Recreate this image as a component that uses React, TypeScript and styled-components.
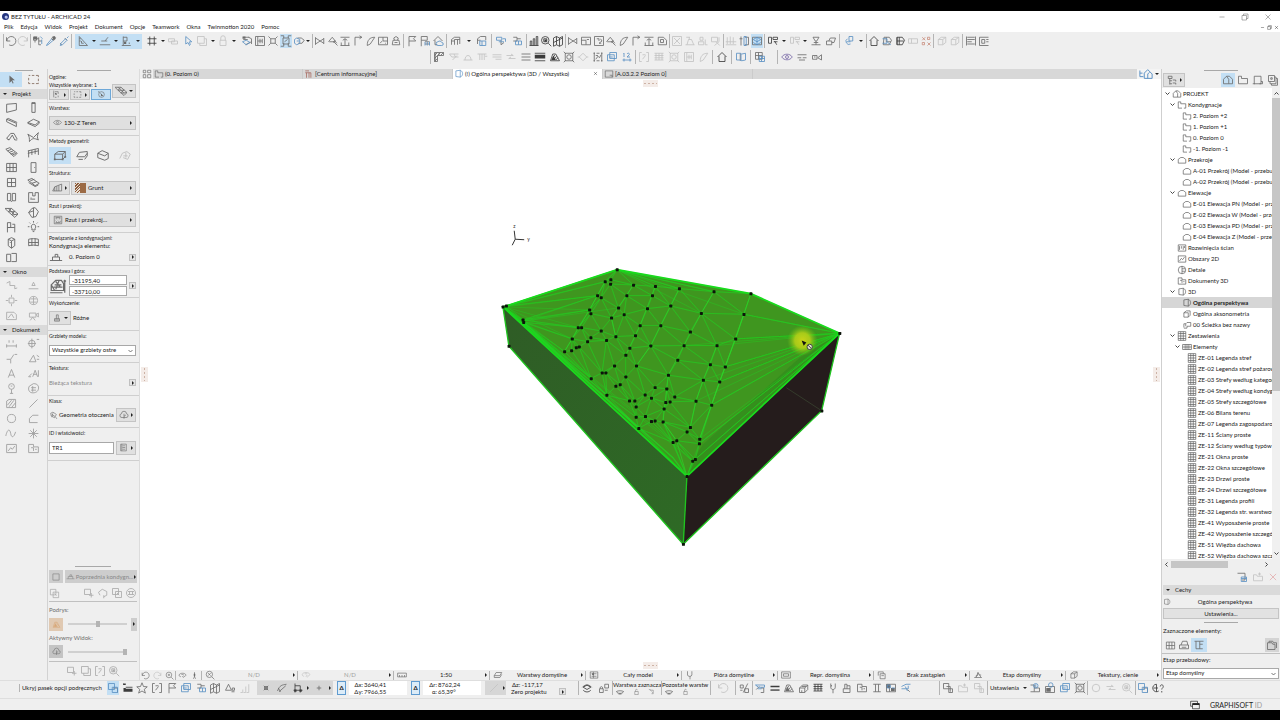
import React from 'react';
import styled, { createGlobalStyle, css } from 'styled-components';

const Global = createGlobalStyle`
  *, *::before, *::after { box-sizing: border-box; }
  html, body { margin: 0; background: #000; }
  body, button, input, select {
    font-family: Lato, "Open Sans", "Liberation Sans", sans-serif;
    font-size: 6px;
    line-height: 8px;
    color: #222;
  }
  button { background: none; border: 0; padding: 0; margin: 0; cursor: pointer; }
`;

/* ---------- icons: [outline, blue accent, solid] on a 16 unit grid ---------- */
const ICONS: Record<string, string[]> = {
  undo: ['M2 3v5h5M2.5 8a6 6 0 1 1 3 5.2'],
  redo: ['M14 3v5h-5M13.5 8a6 6 0 1 0-3 5.2'],
  params: ['M2 3h4v4h-4zM6 5h3M9 3v10M9 8h4M9 13h3M4 7v3', 'M11 2l3 3M13 6v6', 'M2 2h5v4h-5z'],
  pick: ['M9 5l2 2M10 3l3-1 1 1-1 3-2 1-2-2z', 'M9 5l-6 7-1 2 2-1 7-6', 'M10 2h3l1 3-3 2z'],
  inject: ['M9 4l3 3M3 11l2 2', 'M10 5l-6 6-1 3 3-1 6-6zM12 4l2-2'],
  ruler: ['M3 2v12h11zM6 8v3h3M3 5h2M3 8h2', '', ''],
  guide: ['M1 13h14M3 8h8M8 8l4-5', '', ''],
  snapto: ['M3 2v12M3 3h5v5h-5M1 14h12M11 10v2', '', 'M4 9h3v3h-3z'],
  grid: ['M5 2v12M11 2v12M2 5h12M2 11h12'],
  trace: ['M2 5h8v4h-8zM6 8h8v4h-8z'],
  cursor: ['', 'M5 2v10l3-2 2 4 1-1-1-4h3z'],
  copyset: ['M2 2h9v9h-9zM5 11v3h9v-9h-3'],
  lock: ['M4 7h8v7h-8zM5 7v-3a3 3 0 0 1 6 0v3'],
  layers: ['M3 3h8M3 6h6M6 13l8-4M10 3l4 2v7', 'M2 9l5-2 5 3-5 3z', 'M2 2h4v3h-4z'],
  dims: ['M2 2h12v12h-12zM5 2v12M8 5v6M11 5v6M5 8h6'],
  group: ['M5 5h6v6h-6zM2 2l3 3M14 2l-3 3M2 14l3-3M14 14l-3-3'],
  ungroup: ['M4 4h8v8h-8zM1 1h4v3M15 1h-4v3M1 15h4v-4M15 15h-4v-4M6 9l4-3'],
  solid: ['M6 4h5l4 3-3 4h-5', 'M2 6l3-2 4 2v5l-4 2-3-2zM5 8h4'],
  split: ['M2 3v10M2 4l11 7M2 12l11-7M13 4v8', '', ''],
  trim: ['M2 9l5-6 4 5-3 2M8 8l6 6M10 7l3 4M3 9l5 0'],
  adjust: ['M2 3h12M8 5v9M5 7l3-2 3 2M3 10v4M13 10v4M2 14h12'],
  corner: ['M4 14v-11h9M10 1l3 2-3 2'],
  fillet: ['M3 14c0-7 3-11 10-11M3 14l4-2 6-9'],
  resize: ['M2 3h12v10h-12zM8 3v5h6M4 11l3-3M11 11h1'],
  weight: ['M3 13l1-6h8l1 6zM6 7l-1-3 3-2 3 2-1 3M6 10h4'],
  flag: ['M4 15v-13h9l-3 3 3 3h-9'],
  flaggrid: ['M3 15v-13h8v5h-8M8 9h6M8 12h6', 'M8 9v5M11 9v5M14 9v5'],
  cloudhouse: ['M2 8l6-6 6 6M4 7v6h3', 'M8 14a2.500 2.500 0 0 1 0-5 3 3 0 0 1 5 1 2 2 0 0 1 0 4z'],
  couch: ['M2 13v-7l4-3h7v9M6 13v-7h7M2 8h4M10 6v7'],
  couchblue: ['M2 12v-7l4-3h7v5M2 7h4', 'M5 8h8v6h-8zM8 8v6'],
  filter: ['M8 7v6M8 13l4-3', 'M2 3h7v4h-7zM10 5h4v4M5 9h7'],
  filter2: ['M3 3h5v5h-5M8 5h5', 'M6 8h8v5h-8zM10 8v5'],
  chart: ['M2 14h12M3 14v-6h2v6M7 14v-9h2v9M11 14v-12h2v12'],
  zoomel: ['M7 2a5 5 0 1 1 0 10 5 5 0 1 1 0-10M11 11l4 4M5 5h4v4h-4z', '', 'M6 6h3v3h-3z'],
  mapm: ['M2 4l4-2 4 2 4-2v11l-4 2-4-2-4 2zM6 2v11M10 4v11M2 10l12-6'],
  box2: ['M2 3h12v10h-12zM2 7h6v6M9 6h3'],
  stretch: ['M2 2h12v12h-12zM5 5h3v3M11 11h-3M10 5l2 3-4 3'],
  page: ['M3 3h7l4 4v6h-11zM6 6h4v4h-4z'],
  xbox: ['M2 2h12v12h-12zM4 4l8 8M12 4l-8 8'],
  trap: ['M2 13h12M4 13l2-7h4l3 7M3 3h5M7 3v3'],
  stack: ['M4 3h4v4h-4zM2 9h7v4h-7zM11 6v7h3'],
  diag: ['M2 3h8v6h-8zM8 9l5 5M12 3v6l-6 5'],
  pile: ['M3 3v9M7 2v10M11 3v9M1 9h14M1 13h14'],
  wallflip: ['M4 2v12M2 5h4M9 3h5v10h-5', 'M8 2h3v12h-3z'],
  globe: ['M2 3h12v10h-12z', 'M3 6l5-3 5 3-5 3zM3 10l5 3 5-3M8 3v10'],
  cols: ['M2 3h4v8h-4zM8 3h6v3h-6zM10 8l3 5M9 9h5', '', ''],
  cloudline: ['M4 3h8l-3 5h-2zM2 13h12M8 8v5M5 10h6'],
  pages: ['M2 8h7v5h-7zM5 8l2-4h7l-2 6h-3'],
  chain: ['', 'M6 5a4 4 0 1 0 4 7M8 2h5v6h-5zM5 9h5'],
  home: ['M2 8l6-6 6 6M4 7v7h8v-7'],
  bluetrace: ['M4 3h7l3 4-3 6h-8zM7 3v6h6', 'M2 5h6v6h-6M9 10l4 3'],
  tracebk: ['M4 3h7l3 4-3 6h-7zM4 3v10M7 3v10M4 8h9'],
  faint: ['M2 5h12v6h-12zM6 5v6'],
  redx: ['M3 3l4 4M7 3l-4 4M10 3h3v3h-3zM3 10h3v3h-3zM10 10l4 4M14 10l-4 4'],
  cube: ['M3 6l4-3h6v7l-4 3h-6zM3 6h6v7M9 6l4-3'],
  report: ['M3 3h10M3 6h10M3 9h6M3 12h10M2 2v12M14 2v12'],
  report2: ['M2 3h12M2 14h12M5 6h4v5h-4zM11 6h3M11 9h3M2 3v11'],
  hatch: ['M2 2h12v4h-8v8h-4zM2 6l4-4M6 6l4-4M10 6l4-4M2 10l4-4M2 14l4-4M3 2v12M8 2v4'],
  slopes: ['M2 4h12M5 8h9M2 4l3 4M8 4l2 4M6 12l6-6'],
  dome: ['M2 12h12M4 12c0-4 2-6 4-6s4 2 4 6'],
  colsm: ['M2 4h12M5 4v8M8 4v8M11 4v8M12 7h3'],
  swap: ['M2 6h9M8 4l3 2M5 10h9M8 8l-3 2'],
  line2: ['M2 5h12M2 8h12M6 11h8'],
  line3: ['M2 4h12M2 8h12M2 12h12'],
  linebold: ['M1 13h14M1 3h14', '', 'M1 5h14v5h-14z'],
  hill: ['M2 13l3-9h4l5 9zM5 9l3-4M6 12l4-5M9 12l3-3', '', 'M3 12l3-6 3 6z'],
  knot: ['M3 3h10v10h-10zM1 1l3 3M15 1l-3 3M1 15l3-3M15 15l-3-3M8 5a3 3 0 1 1 0 6 3 3 0 1 1 0-6'],
  diamond: ['M8 3l5 5-5 5-5-5zM1 8h2M13 8h2'],
  multi: ['M2 3h2M6 3h4M12 3h2M2 13h2M6 13h4M12 13h2M3 2v12M13 2v12M5 11l3-4 2 2 2-4M5 6h3'],
  bluecopy: ['', 'M5 2h9v8h-9zM2 5h9v8h-9zM4 8h5'],
  bluetwelve: ['', 'M4 3v5M3 4l1-1M8 4c1-2 4-1 3 1l-3 3h4M2 12h12M4 10v4M12 10v4'],
  blueboard: ['M7 3v10', 'M2 3h5l2 1 5-1v9l-5 1-2-1h-5zM8 4v9'],
  bluegrid: ['M2 2h9v9h-9zM6 2v9M2 6h9', 'M7 7h7v7h-7zM10 7v7M7 10h7'],
  eye: ['M1 8c3-5 11-5 14 0-3 5-11 5-14 0zM8 6a2 2 0 1 1 0 4 2 2 0 1 1 0-4'],
  eqs: ['M2 5h12M2 9h5M9 9h5M4 12h8'],
  fish: ['M2 6h6v5h-6zM9 9l5-4v7zM4 8h2'],
  arrowsel: ['', '', 'M5 2v11l3-3 2 4 1-1-2-4h4z'],
  marquee: ['M2 3h2M6 3h3M11 3h3v2M14 7v3M14 12v1h-3M9 13h-3M4 13h-2v-2M2 9v-3'],
  wall: ['M2 4l12-1v8l-12 3z'],
  column: ['M6 2h4v12h-4zM6 3h4'],
  beam: ['M2 4l12 5v4l-12-6zM2 4l2-1 11 5'],
  slab: ['M1 8l7-4 7 3-5 4zM1 8v1l9 4 5-4v-2'],
  roof: ['M2 9l5-6h4l4 7M2 9l3 2 4-6 3 6h3M5 11l-2-1'],
  shell: ['M1 4c2 3 2 5 2 9 4-5 6-4 11-2-2-3-1-6 0-9l-6 6z'],
  stair: ['M1 4l5-2 9 7-4 4zM3 6l5-2M5 8l5-2M7 10l5-2M9 11l5-2'],
  rail: ['M1 6l13-3M2 6v8M6 5v6M10 4v6M14 3v8M1 9l13-3'],
  curtain: ['M2 3h12v10h-12zM6 3v10M10 3v10M2 8h12'],
  door: ['M5 2h6v12h-6zM9 8h1'],
  window: ['M3 3h10v10h-10zM8 3v10M3 8h10'],
  skylight: ['M1 5l5-2 9 6-5 3zM4 6l5-2M6 9l6-2M2 8l8 5 4-2'],
  opening: ['M3 3h4v9h-4zM9 3h4v9h-4zM7 12l1 1 1-1'],
  zone: ['M2 2h5v4h3v-4h4v12h-12zM6 10h4M5 8v3'],
  mesh: ['M0 3l8 0 8 7-4 4M0 3l4 4h8M4 7l8 7M4 3l8 8M8 3l-4 4M12 6l-4 5M16 10l-7 1'],
  morph: ['M6 3l4-1 4 5-3 6-5 1-4-6zM8 2v12M2 8l6-2'],
  object: ['M3 2h4v6h-4zM3 8v6M7 8h5v6M3 8h4M9 4h3v4'],
  lamp: ['M8 4a3 3 0 0 1 2 5v2h-4v-2a3 3 0 0 1 2-5M7 13h2M8 0v2M1 7h2M13 7h2M3 2l1 1M13 2l-1 1'],
  elem: ['M4 4l4-2 4 2v8l-4 3-4-3zM4 4l4 2 4-2M8 6v9M6 8h1'],
  panel: ['M2 4c4-1 8-1 12 0v8c-4-1-8-1-12 0zM6 3v9M10 3v9M2 8h12'],
  sheet: ['M2 4h5v9h-5zM8 3h6v10h-6'],
  section: ['M2 5l4-2v5h6v4M12 12l3-1'],
  elev: ['M2 12h12M8 4l2 4h-4z'],
  interior: ['M8 1v3M8 12v3M1 8h3M12 8h3M5 5h6v6h-6z'],
  detail: ['M8 3a5 5 0 1 1 0 10 5 5 0 1 1 0-10M8 3v10M4 6h8M4 10h8'],
  sheet2: ['M2 4h9l3 3v6h-12zM4 11l4-5 3 5'],
  camera: ['M3 5h8v5h-8zM11 7l3-2v5zM7 10l-3 4M7 10l3 4'],
  dimn: ['M2 11h12M2 9v4M14 9v4M5 4v3M10 4v3'],
  level: ['M6 4a4 4 0 1 1 0 8 4 4 0 1 1 0-8M6 2v12M1 8h10M12 3h3'],
  radial: ['M2 9h5l4-6M7 9v5M12 3h3'],
  angle: ['M3 12l5-8 3 8zM12 4l3 2M12 9h3'],
  texta: ['M4 13l4-10 4 10M5 10h6'],
  label: ['M2 12l4-4M2 12h3M7 12l3-8 3 8M8 9h4M14 4v8'],
  gridm: ['M8 2a3.500 3.500 0 1 1 0 7 3.500 3.500 0 1 1 0-7M8 9v5M6 14h4M7 5h2'],
  change: ['M8 2c5 0 7 3 6 7s-6 5-9 4-4-5-2-8zM5 7h6M5 10h6M7 5v7'],
  fill: ['M2 5l3-2h8v10h-11zM3 10l5-6M5 12l6-8M8 13l5-6'],
  line: ['M3 13l10-10'],
  circle: ['M8 3a5 5 0 1 1 0 10 5 5 0 1 1 0-10'],
  poly: ['M3 13v-5l4-4h7M3 13h10'],
  spline: ['M1 11c2-9 5-9 6-3s4 5 6-2'],
  spark: ['M8 2v12M2 8h12M4 4l8 8M12 4l-8 8'],
  picture: ['M2 3h12v10h-12zM4 11l3-4 2 2 3-4'],
  drawing: ['M2 3h6v3h6v7h-12zM5 7h3v4M10 9h2'],
  mesh1: ['M2 7l4-3h8v6l-3 3h-9zM2 7h9v6M11 7l3-3', '', 'M1 12h2v2h-2zM10 12h2v2h-2zM13 9h2v2h-2z'],
  mesh2: ['M2 10l3-5 9-1v5l-3 4M2 10l9 0 3-4M4 13h5'],
  mesh3: ['M2 6l5-3 7 3v6l-4 2-8-3zM2 6l8 3 4-3'],
  mesh4: ['M2 12l3-6M5 6l5-2 4 3-3 6-5-2M6 9h5M9 5v6'],
  select1: ['M3 3v10M5 3h6v4M11 10v3M5 13h3M6 6l3 3M2 2h2', '', 'M5 5l4 1-3 3z'],
  target: ['M8 3a5 5 0 1 1 0 10 5 5 0 1 1 0-10M6 6l4 4', '', 'M7 6l4 4-4 1zM2 2l3 1-2 2z'],
  surf: ['M1 13l3-6 10-4v10zM4 7v6M7 6v7M10 5v8'],
  floor: ['M1 12h14M4 12v-4h8v4M7 8v-3h3v3'],
  heights: ['M2 7l4-4h5l2 3v6h-8zM5 7l6 0M2 7v5h3M1 14h11M14 3v11M13 4l1-1 1 1M4 9h8M6 4l4 5M9 3l-3 8', '', ''],
  brush: ['M4 13h8v-4h-8zM7 9v-6h3v6M5 11h6'],
  tree: ['M8 14v-8M5 12a3 3 0 0 1-1-6 4 4 0 0 1 8 0 3 3 0 0 1-1 6zM8 10l3-2'],
  classif: ['M3 4l4-2 6 4-3 6-6-3zM5 6l6 4M7 4l-2 7M12 11l2 3'],
  list: ['M3 2h10v12h-10zM6 5h5M6 8h5M6 11h5M5 2v12'],
  seccut: ['M2 2h12v12h-12zM4 6h3M9 6h3M4 9l2 2M8 9l2 2M11 10h2M4 4h8M4 12h8', '', ''],
  square: ['M3 3h10v10h-10z'],
  plusbox: ['M2 3h8v7h-8zM11 8v6M8 11h6'],
  rotate: ['M4 11l-2-4 5-4 6 3v5l-4 2M9 11v4'],
  mirror: ['M2 2h8v8h-8zM6 6h8v8h-8zM8 8l3 3'],
  basket: ['M8 2a6 6 0 1 1 0 12 6 6 0 1 1 0-12M4 6h8M4 10h8M6 6v4M10 6v4'],
  navtree: ['M3 3h5v3h-5zM5 6v8M5 9h3M5 13h3M9 8h4v2M9 12h4v2', '', ''],
  navhouse: ['M2 13v-6l4-4 3 4v6zM6 3h4l4 4v6h-5'],
  navview: ['M2 13v-10h4v3h8v7z'],
  navbook: ['M3 3h9v10h-9zM1 13h3M12 10h2v3h-4'],
  navpub: ['M2 2h8v8h-8zM4 10v3h8v-9h-2M6 13v2h8v-9h-2M5 5h2v2h-2z'],
  story: ['M2 13v-10h4v3h8v7h-3M2 13h6'],
  secic: ['M2 13v-6l4-3h4l4 3v6z'],
  worksheet: ['M2 3h12v10h-12zM4 5v6M7 5v4M10 5v6M12 5v3'],
  detailn: ['M8 2a6 6 0 1 1 0 12 6 6 0 1 1 0-12M8 2v12M8 6h5M8 10h5'],
  three: ['M3 3l7-1v11l-7-1zM10 2c5 2 5 9 0 11'],
  axono: ['M3 6l4-3h6v7l-3 3h-7zM3 6h7v7'],
  cam: ['M3 12v-6h3l2-2h6v6h-6v3h-5M6 6v4'],
  sched: ['M2 1h12v14h-12zM6 1v14M10 1v14M2 4h12M2 8h12M2 12h12'],
  sched2: ['M1 4h14v8h-14zM5 4v8M8 4v8M11 4v8M1 8h14'],
  newview: ['M2 3h10v9h-4', 'M7 8h7v6h-7zM7 10h7'],
  folder: ['M2 5h4l1 2h7v6h-12zM10 2v4M8 4h4'],
  close: ['M3 3l10 10M13 3l-10 10'],
  layout: ['M2 3h12v10h-12zM9 10h4v3'],
  info: ['M2 6h9v8M4 6v8M8 6v8M2 3h6', '', ''],
  tabgrid: ['M2 2h4v4h-4zM9 2h5v4h-5zM2 9h4v5h-4zM9 9h5v5h-5z'],
  bluehouse: ['', 'M1 4v7h4M1 7h3M6 13v-6l4-4 5 5v5zM10 13v-5l2-2'],
  printer: ['M2 8h12v5h-12zM4 8l2-5h6l1 5M5 11h6'],
  pipe: ['M2 3h12M4 3v10M9 3v10M4 13h9M9 7h4'],
  pages2: ['M2 5h6l1 2h3v7h-10zM4 5v-2h5l1 2h4v7'],
  zoomin: ['M7 2a5 5 0 1 1 0 10 5 5 0 1 1 0-10M11 11l4 4M5 7h4M7 5v4'],
  orbit: ['M2 7c1-4 11-4 12 0 0 2-2 3-4 3M10 8l-2 2 2 2M6 6h4M5 10c-2 0-3-1-3-3'],
  walk: ['M8 2v2M8 6v4M8 10l-2 4M8 10l2 4M6 7h4', '', 'M7 4h2v6h-2z'],
  fit: ['M7 2a5 5 0 1 1 0 10 5 5 0 1 1 0-10M11 11l4 4M5 5l4 4M9 5l-4 4'],
  scale: ['M1 5h14v6h-14zM4 8v3M8 8v3M12 8v3'],
  layerst: ['M2 9l3-5h9l-3 5zM2 12h9l3-5M2 9v3'],
  model: ['M2 3h12v10h-12zM4 6h8M4 10h8M7 3v10', '', 'M5 5h3v3h-3z'],
  pen: ['M4 2v6c0 3 7 3 7 0v-6M8 10v5'],
  repr: ['M1 3h14v10h-14zM4 6h8v4h-8z'],
  over: ['M2 3h8v3M5 6h8v8h-8zM7 9h4M2 3v6'],
  etap: ['M2 12h12M5 12l3-8 5 8M8 4v4l-4 2M10 8h3'],
  star: ['M8 1l2 5 5 .4-4 3.400 1.500 5-4.500-2.800-4.500 2.800 1.500-5-4-3.400 5-.4z'],
  bluelink: ['M8 8h6v6', 'M2 2h8v8h-8zM7 7h7v7h-7z'],
  bar: ['M2 2v2M5 7h9', '', 'M2 8h3v1h9v4h-12zM2 2h3v2h-3z'],
  brackets: ['M5 2h-3v12h3M11 2h3v12h-3M6 5h4M6 11l4-5'],
  deltaA: ['M6 3l4 8h-8zM11 8h3v3h-3zM10 13h4'],
  steps: ['M2 14h3v-4M6 14h3v-8M10 14h3v-11'],
  xsmall: ['M5 5l6 6M11 5l-6 6M6 6h4v4h-4z'],
  curve: ['M2 12c3-8 6-8 12-9M4 13l9-8M3 8l3 5'],
  axes: ['M4 2v12M2 11h12M4 5h7v9', '', 'M3 10h3v3h-3zM10 10h3v3h-3z'],
  plus: ['M5 8h6M8 5v6'],
  gravity: ['M2 7c3-4 9-4 12 0M8 4l5 3-5 3-5-3zM3 11c3 3 7 3 10 0'],
  locks: ['M2 9h5v5h-5zM3 9v-2a2 2 0 0 1 3 0v2M9 3h5v5h-5zM9 11h4'],
  dish: ['M1 7c3-2 11-2 14 0-1 5-13 5-14 0zM5 12h6'],
  lockr: ['M4 8h8v7h-8zM6 8v-3a2 2 0 0 1 4 0'],
  hdoc: ['M2 3l5 2M5 5h7v8h-4M8 8l3 3'],
  pct: ['M3 4h4v4h-4zM13 2l-6 12M9 9h5v5h-5zM3 11h3'],
  bluewall: ['M9 8h4v6h-4M3 10l4-4', 'M2 4h12v3h-8zM5 9l5 0'],
  lineb: ['M2 11h12', '', 'M2 5h12v2h-12zM2 10h12v1h-12z'],
  cubes: ['M2 8l4-4h7v6l-4 4h-7zM2 8h7v6M9 8l4-4M5 6h6M5 11v3'],
  hatchsq: ['M2 3h12M2 6h12M2 9h12M2 12h12M4 3v9M8 3v9M12 3v9'],
  wine: ['M5 2v5c0 4 6 4 6 0v-5M8 10v5M6 4v2'],
  truck: ['M3 9h9v5h-9zM5 9v-6h3v6M8 5h4v4'],
  beamI: ['M3 3h10M3 13h10M6 3v10M10 3v10'],
  bluemap: ['M2 3h12v10h-12zM6 3v10', 'M3 4h4v4h-4zM9 8h4', 'M2 3h5v5h-5zM8 8h5v4h-5z'],
  blueshare: ['M10 10l3 3', 'M2 6l6-3h6M2 9h9M7 6l3 6M11 5v4'],
  docs: ['M2 2h7v7h-7zM6 6h5v7M9 9h5v5h-5z'],
  folderb: ['M2 4h5v9h-5M7 8h7v5h-7', 'M9 2a3 3 0 1 1 0 6 3 3 0 1 1 0-6M9 3v4'],
  camb: ['M2 6h12v8h-12z', 'M9 1a3 3 0 1 1 0 6 3 3 0 1 1 0-6', 'M3 8h6v5h-6z'],
  globeq: ['M6 3a5 5 0 1 0 3 9M2 8h6M6 3v10M11 6c0-3 4-3 4 0 0 2-2 2-2 4M13 12v2'],
  restore: ['M2 5h9v9h-9zM5 5v-3h9v9h-3'],
  minimise: ['M3 8h10'],
  windows: ['M1 2h11v3M4 6h11v8h-11zM1 2v8h3', '', 'M4 5h11v3h-11z'],
};

const Svg = styled.svg<{ $s: number }>`
  width: ${p => p.$s}px;
  height: ${p => p.$s}px;
  flex: none;
  display: block;
`;

const FADED = '#c2c2c2';
type IconProps = { n: string; s?: number; c?: string };
const Icon = ({ n, s = 12, c = '#6c6c6c' }: IconProps) => {
  const [base, accent, solid] = ICONS[n];
  return (
    <Svg $s={s} viewBox="0 0 16 16" fill="none" strokeWidth="1.1" aria-hidden="true">
      {solid && <path d={solid} fill={c} />}
      {base && <path d={base} stroke={c} />}
      {accent && <path d={accent} stroke={c === FADED ? c : '#5a90c4'} />}
    </Svg>
  );
};

const Caret = styled.i<{ $dir?: 'right' }>`
  width: 0;
  height: 0;
  flex: none;
  border: 2px solid transparent;
  ${p => p.$dir === 'right'
    ? css`border-left: 2px solid #222; border-right: 0;`
    : css`border-top: 2px solid #222; border-bottom: 0;`}
`;

/* ---------- frame ---------- */
const Page = styled.div`
  height: 100vh;
  display: flex;
  flex-direction: column;
  background: #efefef;
  border-top: 11px solid #000;
  border-bottom: 10px solid #000;
  overflow: hidden;
`;
const TitleBar = styled.header`
  display: flex;
  align-items: center;
  gap: 2px;
  height: 11px;
  padding: 0 8px 0 2px;
  background: #fff;
`;
const AppMark = styled.span`
  width: 7px;
  height: 7px;
  border-radius: 50%;
  background: radial-gradient(circle at 60% 60%, #b9c4ee 0 1px, #24357f 2px);
`;
const Title = styled.h1`
  margin: 0;
  font-size: 6px;
  line-height: 10px;
  font-weight: 400;
  flex: 1;
`;
const WindowButtons = styled.div<{ $gap: number }>`
  display: flex;
  gap: ${p => p.$gap}px;
`;
const MenuBar = styled.nav`
  display: flex;
  align-items: center;
  gap: 7px;
  height: 10px;
  padding: 0 1px 0 4px;
  background: #fff;
`;
const Spacer = styled.span`flex: 1;`;
const Toolbars = styled.div`
  height: 37px;
  padding-top: 1px;
`;
const ToolRow = styled.div<{ $start: number }>`
  display: flex;
  align-items: center;
  height: 16px;
  padding-left: ${p => p.$start}px;
`;
const Group = styled.div<{ $w: number; $bare?: boolean }>`
  display: flex;
  align-items: center;
  justify-content: space-around;
  width: ${p => p.$w}px;
  flex: none;
  height: 14px;
  border-left: 1px solid ${p => (p.$bare ? 'transparent' : '#b4b4b4')};
  padding: 0 1px;
`;
const Tool = styled.button<{ $on?: boolean; $pressed?: boolean; $w?: number }>`
  display: flex;
  align-items: center;
  justify-content: center;
  height: 14px;
  min-width: ${p => p.$w ?? 12}px;
  background: ${p => (p.$on ? '#c3dff4' : p.$pressed ? '#d4d4d4' : 'none')};
`;
const SnapBlock = styled.div`
  display: flex;
  align-items: center;
  justify-content: space-around;
  flex: 1;
  height: 15px;
  margin-left: 2px;
  background: #c3dff4;
`;

const FLAG_COLORS: Record<string, string> = { f: FADED, r: '#c98f80', p: '#7a6aa8', d: '#3c3c3c' };
const tools = (spec: string) =>
  spec.split(' ').filter(Boolean).map((t, i) => {
    if (t === 'v') return <Caret key={i} />;
    if (t === 'r') return <Caret key={i} $dir="right" />;
    const [n, flag] = t.split(':');
    return <Tool key={i} $on={flag === 'h'} aria-label={n}><Icon n={n} c={FLAG_COLORS[flag]} /></Tool>;
  });

type GroupSpec = { w: number; t: string; bare?: boolean; snap?: boolean };
const Groups = ({ list }: { list: GroupSpec[] }) => (
  <>
    {list.map((g, i) => (
      <Group key={i} $w={g.w} $bare={g.bare}>
        {g.snap ? <SnapBlock>{tools(g.t)}</SnapBlock> : tools(g.t)}
      </Group>
    ))}
  </>
);

const ROW_1: GroupSpec[] = [
  { w: 27, t: 'undo redo:f' },
  { w: 41, t: 'params pick inject' },
  { w: 72, t: 'ruler v guide v snapto v', snap: true },
  { w: 95, t: 'grid:d v trace:f cursor copyset:f v lock:f v', bare: true },
  { w: 74, t: 'layers dims group ungroup:h solid v', bare: true },
  { w: 91, t: 'split trim adjust corner fillet resize weight' },
  { w: 43, t: 'flag flaggrid cloudhouse' },
  { w: 45, t: 'couch v couchblue' },
  { w: 35, t: 'filter filter2' },
  { w: 39, t: 'chart:d zoomel:d mapm:d' },
  { w: 104, t: 'split box2 stretch trim fillet corner adjust page' },
  { w: 54, t: 'xbox:f trap:f stack:f diag:f' },
  { w: 41, t: 'pile:f wallflip globe:h' },
  { w: 75, t: 'cols:d v cols:f v cloudline pages' },
  { w: 27, t: 'chain v' },
  { w: 67, t: 'home:d bluetrace tracebk:d faint:f redx:r' },
  { w: 29, t: 'cube:f cube:f' },
  { w: 29, t: 'report report2' },
];
const ROW_2: GroupSpec[] = [
  { w: 205, t: 'hatch slopes:f dome:f colsm:f line2:f swap:f line3 linebold:d hill:d knot diamond:f multi bluecopy bluetwelve' },
  { w: 77, t: 'brackets:f hatchsq:f knot:f dims:f fillet:f' },
  { w: 19, t: 'home:d' },
  { w: 19, t: 'blueboard' },
  { w: 19, t: 'bluegrid' },
  { w: 8, t: '', bare: true },
  { w: 48, t: 'eye:p eqs fish' },
];
const MENUS = ['Plik', 'Edycja', 'Widok', 'Projekt', 'Dokument', 'Opcje', 'Teamwork', 'Okna', 'Twinmotion 2020', 'Pomoc'];

/* ---------- main area ---------- */
const Main = styled.main`
  flex: 1;
  min-height: 0;
  display: flex;
`;
const Toolbox = styled.aside`
  width: 48px;
  flex: none;
  border-right: 1px solid #d2d2d2;
`;
const Grip = styled.div<{ $w: number }>`
  width: ${p => p.$w}px;
  height: 1px;
  margin: 1px auto;
  background: #a8a8a8;
`;
const ToolGrid = styled.div`
  display: grid;
  grid-template-columns: 22px 22px;
  grid-auto-rows: 15px;
  place-items: center;
`;
const ToolHeading = styled.button`
  display: flex;
  align-items: center;
  gap: 5px;
  width: 47px;
  height: 10px;
  margin: 2px 0 1px;
  padding-left: 3px;
  background: #dadada;
`;
const PickButton = styled.button<{ $on?: boolean }>`
  display: grid;
  place-items: center;
  width: 22px;
  height: 15px;
  background: ${p => (p.$on ? '#c3dff4' : 'none')};
`;

const InfoBox = styled.aside`
  width: 92px;
  flex: none;
  display: flex;
  flex-direction: column;
  border-right: 1px solid #dcdcdc;
`;
const Section = styled.section`
  height: 33px;
  &:nth-of-type(odd) { height: 32px; }
  &:first-of-type { height: 31px; }
  padding: 1px 3px 2px 1px;
  border-bottom: 1px solid #cfcfcf;
  display: flex;
  flex-direction: column;
`;
const Caption = styled.h2`
  margin: 0;
  font-size: 5px;
  line-height: 8px;
  font-weight: 400;
  white-space: nowrap;
`;
const SelectionRow = styled.div`
  display: flex;
  align-items: center;
  justify-content: space-between;
`;
const SelectionTools = styled.div`
  display: flex;
  gap: 1px;
`;
const Body = styled.div<{ $gap?: number }>`
  flex: 1;
  display: flex;
  align-items: center;
  gap: ${p => p.$gap ?? 0}px;
  white-space: nowrap;
`;
const Field = styled.button<{ $grow?: boolean; $on?: boolean }>`
  display: flex;
  align-items: center;
  justify-content: space-between;
  gap: 2px;
  height: 14px;
  min-width: 20px;
  padding: 0 2px;
  ${p => p.$grow && 'flex: 1; padding: 0 3px;'}
  background: ${p => (p.$on ? '#c3dff4' : '#e0e0e0')};
  border: 1px solid ${p => (p.$on ? '#6ea8d8' : '#c4c4c4')};
`;
const FieldText = styled.span`flex: 1; text-align: left; white-space: nowrap;`;
const SmallField = styled(Field)`height: 11px; justify-content: space-around;`;
const GeoButton = styled.button<{ $on?: boolean }>`
  display: grid;
  place-items: center;
  width: 22px;
  height: 17px;
  background: ${p => (p.$on ? '#c3dff4' : 'none')};
`;
const Swatch = styled.span`
  width: 11px;
  height: 10px;
  border-right: 6px solid #9c6b45;
  background: repeating-linear-gradient(135deg, #8a5a38 0 1px, #e8ddd2 1px 2px);
`;
const TextInput = styled.input<{ $h: number }>`
  flex: 1;
  min-width: 0;
  width: 100%;
  height: ${p => p.$h}px;
  border: 1px solid #a8a8a8;
  border-radius: 0;
  background: #fff;
  padding: 0 2px;
`;
const Pair = styled.div`
  display: grid;
  flex: 1;
  gap: 1px;
`;
const MiniArrow = styled.button`
  display: grid;
  place-items: center;
  width: 7px;
  height: 7px;
  border: 1px solid #c0c0c0;
  background: #e4e4e4;
`;
const SelectWrap = styled.label`
  position: relative;
  flex: 1;
  display: block;
`;
const Select = styled.select`
  width: 100%;
  height: 11px;
  appearance: none;
  border: 1px solid #a8a8a8;
  border-radius: 0;
  background: #fff;
  padding: 0 2px;
  display: block;
`;
const SelectChevron = styled.svg`
  position: absolute;
  right: 3px;
  top: 4px;
  width: 5px;
  height: 4px;
  pointer-events: none;
`;
const Muted = styled.span`flex: 1; color: #8a8a8a;`;
const Dim = styled.div`
  padding: 0 2px 0 1px;
  color: #6e6e6e;
  margin-top: auto;
`;
const DimRow = styled.div<{ $h: number; $end?: boolean }>`
  display: flex;
  align-items: center;
  gap: 2px;
  height: ${p => p.$h}px;
  ${p => p.$end && 'justify-content: space-around;'}
`;
const DimButton = styled.button<{ $grow?: boolean; $c?: string }>`
  display: flex;
  align-items: center;
  justify-content: center;
  gap: 1px;
  min-width: 14px;
  height: 13px;
  ${p => p.$grow && 'flex: 1; white-space: nowrap;'}
  color: #888;
  background: ${p => p.$c ?? '#cdcdcd'};
`;
const NarrowButton = styled(DimButton)`min-width: 6px;`;
const Rule = styled.hr`
  border: 0;
  height: 1px;
  margin: 0;
  background: #c0c0c0;
`;
const Range = styled.input`
  appearance: none;
  flex: 1;
  min-width: 0;
  height: 8px;
  margin: 0 2px 0 3px;
  background: linear-gradient(#d0d0d0, #d0d0d0) center / 100% 2px no-repeat;
  &::-webkit-slider-thumb {
    appearance: none;
    width: 4px;
    height: 6px;
    background: #b4b4b4;
  }
`;
const SmallGap = styled.span`width: 6px;`;

const Center = styled.div`
  flex: 1;
  min-width: 0;
  display: flex;
  flex-direction: column;
`;
const Tabs = styled.div`
  display: flex;
  height: 10px;
  background: #d8d8d8;
`;
const TabsHome = styled.button`
  display: grid;
  place-items: center;
  width: 13px;
  background: #efefef;
`;
const TabsEnd = styled.div`
  display: flex;
  align-items: center;
  justify-content: space-evenly;
  width: 24px;
  background: #f4f4f4;
`;
const Tab = styled.button<{ $on?: boolean }>`
  display: flex;
  align-items: center;
  gap: 1px;
  width: 150px;
  height: 10px;
  padding: 0 4px 1px 1px;
  border-right: 1px solid #cbcbcb;
  background: ${p => (p.$on ? '#fff' : 'none')};
`;
const TabText = styled.span`flex: 1; text-align: left;`;
const Viewport = styled.div`
  position: relative;
  flex: 1;
  min-height: 0;
  background: #fff;
`;
const Scene = styled.svg`
  display: block;
  width: 100%;
  height: 100%;
`;
const Handle = styled.i<{ $side: 'top' | 'bottom' | 'left' | 'right' }>`
  position: absolute;
  ${p => (p.$side === 'top' || p.$side === 'bottom'
    ? css`left: 50%; margin-left: -8px; width: 15px; height: 7px; border: solid #f4ece8; border-width: 3px 1px; background: repeating-linear-gradient(90deg, #cdb3a6 0 2px, #f4ece8 2px 4px);`
    : css`top: 50%; margin-top: -8px; width: 7px; height: 15px; border: solid #f4ece8; border-width: 1px 3px; background: repeating-linear-gradient(#cdb3a6 0 2px, #f4ece8 2px 4px);`)}
  ${p => p.$side}: 1px;
`;
const QuickBar = styled.div`
  display: flex;
  align-items: center;
  height: 10px;
`;
const QuickGroup = styled.div<{ $w: number }>`
  display: flex;
  justify-content: space-around;
  width: ${p => p.$w}px;
  border-right: 1px solid #b4b4b4;
`;
const QuickCell = styled.button`
  display: flex;
  align-items: center;
  flex: 1;
  height: 9px;
  padding: 0 2px 0 3px;
  border-right: 1px solid #b4b4b4;
  &:last-child { border-right: 0; }
`;
const QuickText = styled.span<{ $dim?: boolean }>`
  flex: 1;
  text-align: center;
  color: ${p => (p.$dim ? '#a0a0a0' : '#222')};
`;
const QUICK: [string, string][] = [
  ['fit', 'N/D'], ['orbit', 'N/D'], ['scale', '1:50'], ['layerst', 'Warstwy domyślne'], ['model', 'Cały model'],
  ['pen', 'Pióra domyślne'], ['repr', 'Repr. domyślna'], ['over', 'Brak zastąpień'], ['etap', 'Etap domyślny'], ['cube', 'Tekstury, cienie'],
];

/* ---------- navigator ---------- */
const Navigator = styled.aside`
  width: 119px;
  flex: none;
  display: flex;
  flex-direction: column;
  border-left: 1px solid #cfcfcf;
`;
const NavHeader = styled.div`
  display: flex;
  align-items: center;
  justify-content: space-between;
  height: 16px;
  padding-left: 1px;
`;
const NavTabs = styled.div`display: flex; gap: 1px;`;
const TreeArea = styled.div`
  flex: 1 1 0;
  min-height: 0;
  display: flex;
  background: #fff;
`;
const Tree = styled.ul`
  flex: 1;
  min-width: 0;
  overflow: hidden;
  list-style: none;
  margin: 0;
  padding: 0;
`;
const TreeRow = styled.li<{ $level: number; $on?: boolean }>`
  display: flex;
  align-items: center;
  height: 11px;
  padding-left: ${p => 1 + p.$level * 5}px;
  white-space: nowrap;
  font-weight: ${p => (p.$on ? 700 : 400)};
  background: ${p => (p.$on ? '#d6d6d6' : 'none')};
`;
const Twist = styled.span`width: 9px; flex: none; display: grid; place-items: center;`;
const TreeIcon = styled.span`width: 11px; flex: none;`;
const VScroll = styled.div`
  width: 8px;
  display: flex;
  flex-direction: column;
  align-items: center;
  justify-content: space-between;
  padding: 3px 0;
  background: #f0f0f0;
`;
const VThumb = styled.i`
  width: 8px;
  height: 63%;
  margin: 2px 0 auto;
  background: #c6c6c6;
`;
const HScroll = styled.div`
  display: flex;
  align-items: center;
  height: 10px;
  padding: 0 11px 0 2px;
`;
const HThumb = styled.i`
  width: 57px;
  height: 7px;
  margin: 0 auto 0 2px;
  background: #c6c6c6;
`;
const NavActions = styled.div`
  display: flex;
  justify-content: flex-end;
  align-items: center;
  gap: 4px;
  height: 16px;
  padding-right: 2px;
`;
const NavHeading = styled(ToolHeading)`width: auto; margin: 0 0 0 1px;`;
const NavLine = styled.div<{ $h: number }>`
  display: flex;
  align-items: center;
  height: ${p => p.$h}px;
  padding: 0 1px;
`;
const NavCentered = styled.span`flex: 1; text-align: center;`;
const WideButton = styled.button`
  height: 11px;
  margin: 0 1px;
  border: 1px solid #c4c4c4;
  background: #e2e2e2;
`;
type Node = [number, string, string, boolean?, boolean?];
const TREE: Node[] = [
  [0, 'navhouse', 'PROJEKT', true],
  [1, 'story', 'Kondygnacje', true],
  [2, 'story', '2. Poziom +2'], [2, 'story', '1. Poziom +1'], [2, 'story', '0. Poziom 0'], [2, 'story', '-1. Poziom -1'],
  [1, 'secic', 'Przekroje', true],
  [2, 'secic', 'A-01 Przekrój (Model - przebudowa)'], [2, 'secic', 'A-02 Przekrój (Model - przebudowa)'],
  [1, 'secic', 'Elewacje', true],
  [2, 'secic', 'E-01 Elewacja PN (Model - przebudowa)'], [2, 'secic', 'E-02 Elewacja W (Model - przebudowa)'],
  [2, 'secic', 'E-03 Elewacja PD (Model - przebudowa)'], [2, 'secic', 'E-04 Elewacja Z (Model - przebudowa)'],
  [1, 'worksheet', 'Rozwinięcia ścian'], [1, 'picture', 'Obszary 2D'], [1, 'detailn', 'Detale'], [1, 'drawing', 'Dokumenty 3D'],
  [1, 'three', '3D', true],
  [2, 'three', 'Ogólna perspektywa', false, true], [2, 'axono', 'Ogólna aksonometria'], [2, 'cam', '00 Ścieżka bez nazwy'],
  [1, 'sched', 'Zestawienia', true],
  [2, 'sched2', 'Elementy', true],
  ...[
    'ZE-01 Legenda stref', 'ZE-02 Legenda stref pożarowych', 'ZE-03 Strefy według kategorii', 'ZE-04 Strefy według kondygnacji',
    'ZE-05 Strefy szczegółowe', 'ZE-06 Bilans terenu', 'ZE-07 Legenda zagospodarowania', 'ZE-11 Ściany proste',
    'ZE-12 Ściany według typów', 'ZE-21 Okna proste', 'ZE-22 Okna szczegółowe', 'ZE-23 Drzwi proste', 'ZE-24 Drzwi szczegółowe',
    'ZE-31 Legenda profili', 'ZE-32 Legenda str. warstwowych', 'ZE-41 Wyposażenie proste', 'ZE-42 Wyposażenie szczegółowe',
    'ZE-51 Więźba dachowa', 'ZE-52 Więźba dachowa szczegółowa',
  ].map((t): Node => [3, 'sched', t]),
];

/* ---------- bottom bars ---------- */
const BottomBar = styled.div`
  display: flex;
  align-items: center;
  height: 18px;
  padding: 0 0 3px 19px;
  border-top: 1px solid #dedede;
  white-space: nowrap;
`;
const Hint = styled.span`
  width: 86px;
  border-left: 1px solid #b4b4b4;
  padding-left: 2px;
`;
const Cluster = styled.div<{ $w: number; $shade?: boolean; $line?: boolean }>`
  display: flex;
  align-items: center;
  justify-content: space-around;
  width: ${p => p.$w}px;
  flex: none;
  height: 14px;
  background: ${p => (p.$shade ? '#d6d6d6' : 'none')};
  border-left: 1px solid ${p => (p.$line ? '#b4b4b4' : 'transparent')};
`;
const DeltaButton = styled.button`
  width: 9px;
  height: 14px;
  margin: 0 3px 0 4px;
  border: 1px solid #5f9bd0;
  background: #dcecf8;
  font-weight: 700;
  flex: none;
`;
const Coords = styled.dl<{ $w: number }>`
  width: ${p => p.$w}px;
  flex: none;
  height: 14px;
  margin: 0;
  padding-left: 2px;
  display: grid;
  grid-template-columns: 12px 1fr;
  line-height: 7px;
  background: #fff;
`;
const Term = styled.dt`text-align: right;`;
const Value = styled.dd`margin: 0 0 0 1px;`;
const ZeroField = styled.div`
  width: 60px;
  flex: none;
  padding-left: 5px;
  line-height: 7px;
`;
const ZeroTop = styled.div`padding-left: 1px;`;
const ZeroRow = styled.div`display: flex; justify-content: space-between; align-items: center; height: 7px;`;
const LayerBlock = styled.div`
  width: 49px;
  flex: none;
  height: 14px;
  border-left: 1px solid #b4b4b4;
  line-height: 7px;
`;
const LayerIcons = styled.div`display: flex; justify-content: space-between; padding: 0 6px 0 3px;`;
const TextMenu = styled.button`
  display: flex;
  align-items: center;
  gap: 4px;
  padding-left: 2px;
  width: 40px;
  height: 14px;
  border-left: 1px solid #b4b4b4;
`;
const Status = styled.footer`
  display: flex;
  align-items: center;
  justify-content: flex-end;
  gap: 10px;
  height: 12px;
  padding-right: 18px;
  border-top: 1px solid #dedede;
`;
const Brand = styled.span`font-size: 7px;`;
const BrandLight = styled.span`color: #9a9a9a;`;

/* ---------- terrain model ---------- */
type P = [number, number];
const RIM: P[] = [[381, 165], [783, 237], [1050, 356], [591, 786], [38, 277]];
const SURVEY: P[] = [
  [48, 274], [345, 201], [362, 195], [361, 208], [322, 243], [333, 249], [430, 211], [496, 215], [568, 222], [672, 231], [762, 299],
  [487, 243], [410, 243], [542, 274], [472, 282], [385, 280], [402, 300], [364, 310], [298, 286], [302, 297], [634, 296], [512, 333],
  [450, 333], [601, 352], [737, 373], [264, 339], [274, 339], [333, 349], [436, 363], [377, 366], [302, 369], [292, 381], [246, 373],
  [349, 377], [482, 394], [582, 393], [681, 393], [419, 401], [223, 411], [244, 408], [258, 399], [267, 397], [407, 422], [563, 437],
  [373, 454], [439, 454], [661, 450], [706, 457], [98, 316], [100, 323], [303, 492], [336, 475], [347, 475], [535, 482], [407, 487],
  [640, 497], [689, 502], [377, 515], [390, 510], [495, 519], [530, 523], [350, 542], [465, 541], [484, 551], [554, 547], [418, 559],
  [434, 559], [527, 564], [540, 562], [618, 560], [665, 572], [438, 577], [522, 583], [438, 608], [466, 606], [446, 642], [484, 621],
  [495, 619], [519, 622], [601, 639], [591, 652], [629, 674], [628, 688], [549, 684], [560, 679], [608, 740], [616, 735],
];
const FEET: P[] = [[56, 395], [580, 990], [996, 589]];

// Bowyer-Watson triangulation of the survey points; returns the edges as one path
const triangulate = (pts: P[]): string => {
  const all: P[] = [...pts, [-9000, -9000], [10000, -9000], [500, 12000]];
  const n = pts.length;
  let tris: number[][] = [[n, n + 1, n + 2]];
  const inside = (t: number[], p: P) => {
    const [ax, ay] = all[t[0]], [bx, by] = all[t[1]], [cx, cy] = all[t[2]];
    const d = 2 * (ax * (by - cy) + bx * (cy - ay) + cx * (ay - by));
    if (!d) return true;
    const a = ax * ax + ay * ay, b = bx * bx + by * by, c = cx * cx + cy * cy;
    const ux = (a * (by - cy) + b * (cy - ay) + c * (ay - by)) / d;
    const uy = (a * (cx - bx) + b * (ax - cx) + c * (bx - ax)) / d;
    return (ux - p[0]) ** 2 + (uy - p[1]) ** 2 < (ux - ax) ** 2 + (uy - ay) ** 2;
  };
  for (let i = 0; i < n; i++) {
    const bad = tris.filter(t => inside(t, all[i]));
    const count = new Map<string, number>();
    const key = (a: number, b: number) => (a < b ? `${a},${b}` : `${b},${a}`);
    bad.forEach(t => [[0, 1], [1, 2], [2, 0]].forEach(([a, b]) => {
      const k = key(t[a], t[b]);
      count.set(k, (count.get(k) ?? 0) + 1);
    }));
    tris = tris.filter(t => !bad.includes(t));
    count.forEach((v, k) => { if (v === 1) tris.push([...k.split(',').map(Number), i]); });
  }
  return tris.filter(t => t.every(v => v < n)).map(t => 'M' + t.map(v => all[v].join(' ')).join('L') + 'Z').join('');
};
const fan = (from: P, to: P[]) => to.map(p => `M${from[0]} ${from[1]}L${p[0]} ${p[1]}`).join('');
const MESH = triangulate([...RIM, ...SURVEY]);
const FANS =
  fan([381, 165], [[568, 222], [672, 231], [762, 299], [634, 296], [345, 201]]) +
  fan([44, 277], [[345, 201], [322, 243], [298, 286], [264, 339], [246, 373], [223, 411], [303, 492], [350, 542], [446, 642], [549, 684], [608, 740]]) +
  fan([1050, 356], [[762, 299], [737, 373], [681, 393], [706, 457], [689, 502], [665, 572], [618, 560], [629, 674], [628, 688], [616, 735], [582, 393], [640, 497]]) +
  fan([98, 320], [[298, 286], [246, 373], [298, 250], [385, 280]]) +
  fan([591, 786], [[549, 684], [608, 740], [446, 642], [519, 622], [628, 688]]);
// survey lines running from the north edge to the south-west
const LINES = 'M783 237L737 373L689 502L629 674M672 231L634 296L582 393L535 482L519 622L560 679L591 786M568 222L512 333L482 394L439 454'
  + 'M496 215L450 333L407 422M430 211L364 310L377 366M762 299L706 457L665 572M681 393L640 497L618 560L601 639M345 201L298 286L246 373L223 411';

const Model = () => (
  <Scene viewBox="140 79 1021 592" role="img" aria-label="Ogólna perspektywa">
    <defs>
      <radialGradient id="halo">
        <stop offset="0" stopColor="#c8d419" />
        <stop offset=".5" stopColor="#b4cf18" stopOpacity=".9" />
        <stop offset="1" stopColor="#6cc018" stopOpacity="0" />
      </radialGradient>
      <linearGradient id="side" x1="0" y1="0" x2="1" y2="1">
        <stop offset="0" stopColor="#2f5c26" />
        <stop offset="1" stopColor="#2e6a25" />
      </linearGradient>
    </defs>
    <path d="M514 231l1 8.500 9 .5M515 239.500l-3 6" stroke="#333" fill="none" />
    <text x="513" y="228" fontSize="5" fill="#333">z</text>
    <text x="527" y="241" fontSize="5" fill="#333">y</text>
    <g transform="translate(490 215) scale(.3333)">
      <path d="M38 277L56 395L580 990L591 786Z" fill="url(#side)" />
      <path d="M591 786L580 990L996 589L1050 356Z" fill="#251c1c" />
      <path d="M890 520L996 589" stroke="#3c4a34" strokeWidth="2" />
      <path d="M381 165L783 237L1050 356L591 786L38 277Z" fill="#3f961f" />
      <path d="M625 712L640 690L930 430L1050 356L591 786Z" fill="#2f8a1c" opacity=".6" />
      <path d={MESH} fill="none" stroke="#22cf20" strokeWidth="2.500" opacity=".5" />
      <path d={FANS} fill="none" stroke="#22cf20" strokeWidth="2.500" opacity=".5" />
      <path d={LINES} fill="none" stroke="#2fd62a" strokeWidth="3" opacity=".6" />
      <path d="M44 280L549 730L591 786M100 323L446 642" fill="none" stroke="#1edc22" strokeWidth="4" opacity=".7" />
      <path d="M38 277L56 395L580 990L996 589L1050 356M580 990L591 786" fill="none" stroke="#1fc41f" strokeWidth="4" />
      <path d="M381 165L783 237L1050 356L591 786L38 277Z" fill="none" stroke="#18dc1c" strokeWidth="5" />
      <circle cx="938" cy="378" r="46" fill="url(#halo)" />
      {[...RIM, ...SURVEY, ...FEET].map(([x, y], i) => (
        <rect key={i} x={x - 4} y={y - 4} width="9" height="9" rx="2" fill="#0c140a" />
      ))}
      <path d="M936 378l14 6-8 10z" fill="#111" />
      <circle cx="960" cy="397" r="8" fill="#dfe8c8" stroke="#444" strokeWidth="3" />
      <path d="M955 392l10 10" stroke="#444" strokeWidth="3" />
    </g>
  </Scene>
);

const PROJECT_TOOLS = 'wall column beam slab roof shell stair rail curtain door window skylight opening zone mesh morph object lamp elem panel sheet'.split(' ');
const VIEW_TOOLS = 'section elev interior detail sheet2 camera'.split(' ');
const DOC_TOOLS = 'dimn level radial angle texta label gridm change fill line circle poly spline spark picture drawing'.split(' ');

const ToolSet = ({ names, color }: { names: string[]; color: string }) => (
  <ToolGrid>
    {names.map(n => <PickButton key={n} aria-label={n}><Icon n={n} s={13} c={color} /></PickButton>)}
  </ToolGrid>
);
const Chevron = () => <SelectChevron viewBox="0 0 5 4"><path d="M.5 1l2 2 2-2" fill="none" stroke="#555" strokeWidth=".8" /></SelectChevron>;
const Tick = ({ d }: { d: string }) => <svg width="5" height="5" viewBox="0 0 5 5"><path d={d} fill="none" stroke="#333" strokeWidth=".9" /></svg>;

export default function App() {
  return (
    <Page>
      <Global />
      <TitleBar>
        <AppMark />
        <Title>BEZ TYTUŁU - ARCHICAD 24</Title>
        <WindowButtons $gap={15}>
          {['minimise', 'restore', 'close'].map(n => <button key={n} aria-label={n}><Icon n={n} s={8} /></button>)}
        </WindowButtons>
      </TitleBar>
      <MenuBar>
        {MENUS.map(m => <button key={m}>{m}</button>)}
        <Spacer />
        <WindowButtons $gap={2}>
          {['minimise', 'restore', 'close'].map(n => <button key={n} aria-label={`${n} document`}><Icon n={n} s={5} c="#000" /></button>)}
        </WindowButtons>
      </MenuBar>
      <Toolbars>
        <ToolRow $start={3}><Groups list={ROW_1} /></ToolRow>
        <ToolRow $start={430}><Groups list={ROW_2} /></ToolRow>
      </Toolbars>

      <Main>
        <Toolbox>
          <Grip $w={18} />
          <ToolGrid>
            <PickButton $on aria-label="Strzałka"><Icon n="arrowsel" s={11} /></PickButton>
            <PickButton aria-label="Zaznaczenie"><Icon n="marquee" s={13} c="#8a7466" /></PickButton>
          </ToolGrid>
          <ToolHeading><Caret />Projekt</ToolHeading>
          <ToolSet names={PROJECT_TOOLS} color="#666" />
          <ToolHeading><Caret />Okno</ToolHeading>
          <ToolSet names={VIEW_TOOLS} color="#acacac" />
          <ToolHeading><Caret />Dokument</ToolHeading>
          <ToolSet names={DOC_TOOLS} color="#a0a0a0" />
        </Toolbox>

        <InfoBox>
          <Grip $w={34} />
          <Section>
            <Caption>Ogólne:</Caption>
            <SelectionRow>
              <div>
                <Caption>Wszystkie wybrane: 1</Caption>
                <SelectionTools>
                  <SmallField aria-label="Wybór"><Icon n="select1" s={9} /><Caret $dir="right" /></SmallField>
                  <SmallField aria-label="Obszar"><Icon n="marquee" s={9} /><Caret $dir="right" /></SmallField>
                  <SmallField $on aria-label="Cel"><Icon n="target" s={9} /></SmallField>
                </SelectionTools>
              </div>
              <Field aria-label="Teren"><Icon n="mesh" s={12} /><Caret /></Field>
            </SelectionRow>
          </Section>
          <Section>
            <Caption>Warstwa:</Caption>
            <Body><Field $grow><Icon n="eye" s={9} /><FieldText>130-Z Teren</FieldText><Caret $dir="right" /></Field></Body>
          </Section>
          <Section>
            <Caption>Metody geometrii:</Caption>
            <Body>
              {['mesh1', 'mesh2', 'mesh3', 'mesh4'].map((n, i) => (
                <GeoButton key={n} $on={i === 0} aria-label={n}><Icon n={n} s={14} c={i === 3 ? FADED : undefined} /></GeoButton>
              ))}
            </Body>
          </Section>
          <Section>
            <Caption>Struktura:</Caption>
            <Body $gap={1}>
              <Field aria-label="Przekrój"><Icon n="surf" s={11} /><Caret $dir="right" /></Field>
              <Field $grow><Swatch /><FieldText>Grunt</FieldText><Caret $dir="right" /></Field>
            </Body>
          </Section>
          <Section>
            <Caption>Rzut i przekrój:</Caption>
            <Body><Field $grow><Icon n="seccut" s={10} /><FieldText>Rzut i przekrój...</FieldText><Caret $dir="right" /></Field></Body>
          </Section>
          <Section>
            <Caption>Powiązanie z kondygnacjami:</Caption>
            <span>Kondygnacja elementu:</span>
            <Body $gap={6}><Icon n="floor" s={14} /><FieldText>0. Poziom 0</FieldText><MiniArrow aria-label="Kondygnacja"><Caret $dir="right" /></MiniArrow></Body>
          </Section>
          <Section>
            <Caption>Podstawa i góra:</Caption>
            <Body $gap={2}>
              <Icon n="heights" s={18} />
              <Pair>
                <TextInput $h={10} aria-label="Góra" defaultValue="-31195,40" />
                <TextInput $h={10} aria-label="Podstawa" defaultValue="-33710,00" />
              </Pair>
              <MiniArrow aria-label="Poziom odniesienia"><Caret $dir="right" /></MiniArrow>
            </Body>
          </Section>
          <Section>
            <Caption>Wykończenie:</Caption>
            <Body $gap={2}><Field aria-label="Powierzchnia"><Icon n="brush" s={10} /><Caret /></Field>Różne</Body>
          </Section>
          <Section>
            <Caption>Grzbiety modelu:</Caption>
            <Body><SelectWrap><Select aria-label="Grzbiety modelu"><option>Wszystkie grzbiety ostre</option></Select><Chevron /></SelectWrap></Body>
          </Section>
          <Section>
            <Caption>Tekstura:</Caption>
            <Body><Muted>Bieżąca tekstura</Muted><MiniArrow aria-label="Tekstura"><Caret $dir="right" /></MiniArrow></Body>
          </Section>
          <Section>
            <Caption>Klasa:</Caption>
            <Body $gap={1}><Icon n="classif" s={9} /><FieldText>Geometria otoczenia</FieldText><Field aria-label="Klasyfikacja"><Icon n="tree" s={10} /><Caret $dir="right" /></Field></Body>
          </Section>
          <Section>
            <Caption>ID i właściwości:</Caption>
            <Body $gap={2}><TextInput $h={12} aria-label="ID" defaultValue="TR1" /><Field aria-label="Właściwości"><Icon n="list" s={9} /><Caret $dir="right" /></Field></Body>
          </Section>

          <Dim>
            <Grip $w={36} />
            <DimRow $h={17}>
              <DimButton aria-label="Podrys"><Icon n="square" s={10} c="#888" /></DimButton>
              <DimButton $grow><Icon n="floor" s={9} c="#888" />Poprzednia kondygn...<Caret $dir="right" /></DimButton>
            </DimRow>
            <DimRow $h={16} $end>
              <Icon n="mirror" s={11} c="#aaa" /><Spacer />
              <Icon n="plusbox" c="#aaa" /><Icon n="rotate" c="#aaa" /><Icon n="mirror" c="#aaa" /><Icon n="basket" c="#aaa" />
            </DimRow>
            <Rule />
            <DimRow $h={16}>Podrys:</DimRow>
            <DimRow $h={12}>
              <DimButton $c="#e0c9b2" aria-label="Kolor podrysu"><Icon n="hill" s={9} c="#d8a878" /></DimButton>
              <Range type="range" aria-label="Podrys" defaultValue={50} />
              <NarrowButton aria-label="Opcje podrysu"><Caret $dir="right" /></NarrowButton>
            </DimRow>
            <DimRow $h={15}>Aktywny Widok:</DimRow>
            <DimRow $h={13}>
              <DimButton $c="#c4c4c4" aria-label="Kolor widoku"><Icon n="tree" s={9} c="#777" /></DimButton>
              <Range type="range" aria-label="Aktywny Widok" defaultValue={100} />
              <SmallGap />
            </DimRow>
            <DimRow $h={3} />
            <Rule />
            <DimRow $h={18} $end>
              <Spacer /><Icon n="plusbox" c="#aaa" /><Icon n="copyset" c="#aaa" /><Icon n="brackets" c="#aaa" /><Icon n="zoomel" c="#aaa" /><Spacer />
            </DimRow>
          </Dim>
        </InfoBox>

        <Center>
          <Tabs>
            <TabsHome aria-label="Przegląd kart"><Icon n="tabgrid" s={10} /></TabsHome>
            <Tab><Icon n="story" s={10} /><TabText>(0. Poziom 0)</TabText></Tab>
            <Tab><Icon n="info" s={10} c="#a05a50" /><TabText>[Centrum informacyjne]</TabText></Tab>
            <Tab $on><Icon n="three" s={10} c="#5a90c4" /><TabText>(!) Ogólna perspektywa (3D / Wszystko)</TabText><Icon n="close" s={5} c="#000" /></Tab>
            <Tab><Icon n="layout" s={10} /><TabText>[A.03.2.2 Poziom 0]</TabText></Tab>
            <Spacer />
            <TabsEnd><Icon n="bluehouse" s={14} /><Caret /></TabsEnd>
          </Tabs>
          <Viewport>
            <Model />
            <Handle $side="top" /><Handle $side="bottom" /><Handle $side="left" /><Handle $side="right" />
          </Viewport>
          <QuickBar>
            <QuickGroup $w={36}><Icon n="undo" s={9} /><Icon n="redo" s={9} c={FADED} /><Icon n="zoomin" s={9} /></QuickGroup>
            <QuickGroup $w={26}><Icon n="orbit" s={9} /><Icon n="walk" s={9} /></QuickGroup>
            {QUICK.map(([n, t], i) => (
              <QuickCell key={i}>
                <Icon n={n} s={10} c={i === 1 ? FADED : undefined} />
                <QuickText $dim={i < 2}>{t}</QuickText>
                <Caret $dir="right" />
              </QuickCell>
            ))}
          </QuickBar>
        </Center>

        <Navigator>
          <Grip $w={34} />
          <NavHeader>
            <Field aria-label="Wybór projektu"><Icon n="navtree" s={12} /><Caret $dir="right" /></Field>
            <NavTabs>
              <Tool $w={14} $on aria-label="Mapa projektu"><Icon n="navhouse" /></Tool>
              <Tool $w={14} aria-label="Mapa widoków"><Icon n="navview" /></Tool>
              <Tool $w={14} aria-label="Teczka arkuszy"><Icon n="navbook" /></Tool>
              <Tool $w={14} aria-label="Wydawca"><Icon n="navpub" /></Tool>
            </NavTabs>
          </NavHeader>
          <TreeArea>
            <Tree>
              {TREE.map(([level, icon, text, open, on]) => (
                <TreeRow key={text} $level={level} $on={on}>
                  <Twist>{open && <Tick d="M.5 1.500l2 2 2-2" />}</Twist>
                  <TreeIcon><Icon n={icon} s={10} c="#5c5c5c" /></TreeIcon>
                  {text}
                </TreeRow>
              ))}
            </Tree>
            <VScroll><Tick d="M.5 3.500l2-2 2 2" /><VThumb /><Tick d="M.5 1.500l2 2 2-2" /></VScroll>
          </TreeArea>
          <HScroll><Tick d="M3.500 .5l-2 2 2 2" /><HThumb /><Tick d="M1.500 .5l2 2-2 2" /></HScroll>
          <NavActions>
            <Icon n="newview" /><Icon n="folder" c={FADED} /><Icon n="close" s={10} c="#e0a0a0" />
          </NavActions>
          <NavHeading><Caret />Cechy</NavHeading>
          <NavLine $h={13}><Icon n="three" s={8} /><NavCentered>Ogólna perspektywa</NavCentered></NavLine>
          <WideButton>Ustawienia...</WideButton>
          <NavLine $h={6}><Grip $w={34} /></NavLine>
          <NavLine $h={12}>Zaznaczone elementy:</NavLine>
          <NavLine $h={16}>
            <Tool $w={14} aria-label="Siatka"><Icon n="curtain" s={11} /></Tool>
            <Tool $w={14} aria-label="Drukuj"><Icon n="printer" /></Tool>
            <Tool $w={16} $on aria-label="Profil"><Icon n="pipe" /></Tool>
            <Spacer />
            <Tool $w={14} $pressed aria-label="Kopie"><Icon n="pages2" /></Tool>
          </NavLine>
          <Rule />
          <NavLine $h={12}>Etap przebudowy:</NavLine>
          <NavLine $h={14}>
            <SelectWrap><Select aria-label="Etap przebudowy"><option>Etap domyślny</option></Select><Chevron /></SelectWrap>
          </NavLine>
        </Navigator>
      </Main>

      <BottomBar>
        <Hint>Ukryj pasek opcji podręcznych</Hint>
        <Cluster $w={147}>{tools('bluelink:h bar:d star brackets flag bluecopy filter2 mapm deltaA steps:f')}</Cluster>
        <Cluster $w={5} />
        <Cluster $w={76} $shade>{tools('xsmall curve axes:d r plus r')}</Cluster>
        <DeltaButton>Δ</DeltaButton>
        <Coords $w={58}><Term>Δx:</Term><Value>3640,41</Value><Term>Δy:</Term><Value>7966,55</Value></Coords>
        <DeltaButton>Δ</DeltaButton>
        <Coords $w={58}><Term>Δr:</Term><Value>8762,24</Value><Term>α:</Term><Value>65,39°</Value></Coords>
        <Cluster $w={4} />
        <Cluster $w={21} $shade>{tools('line:f r')}</Cluster>
        <ZeroField>
          <ZeroTop>Δz: -117,17</ZeroTop>
          <ZeroRow>Zero projektu<MiniArrow aria-label="Poziom zero"><Caret $dir="right" /></MiniArrow></ZeroRow>
        </ZeroField>
        <Cluster $w={12} />
        <Cluster $w={34} $line>{tools('gravity:d locks')}</Cluster>
        <LayerBlock>Warstwa zaznacza<LayerIcons><Icon n="dish" s={8} c="#333" /><Icon n="lockr" s={7} /><Icon n="hdoc" s={7} /></LayerIcons></LayerBlock>
        <LayerBlock>Pozostałe warstw<LayerIcons><Icon n="dish" s={8} c="#333" /><Icon n="lockr" s={7} /><SmallGap /></LayerIcons></LayerBlock>
        <Cluster $w={25} $line>{tools('undo:f')}</Cluster>
        <Cluster $w={17} $line>{tools('pct')}</Cluster>
        <Cluster $w={161} $line>{tools('bluewall lineb:d hill cubes hatchsq:d wine truck drawing beamI bluemap blueshare')}</Cluster>
        <Cluster $w={26} />
        <Cluster $w={48} $line>{tools('docs folder:f docs:f')}</Cluster>
        <TextMenu>Ustawienia<Caret /></TextMenu>
        <Cluster $w={60}>{tools('folderb camb bluecopy knot')}</Cluster>
        <Cluster $w={48} $line>{tools('circle:f swap:f zoomel:f')}</Cluster>
        <Cluster $w={30} $line>{tools('bluelink globeq:d')}</Cluster>
      </BottomBar>
      <Status>
        <Icon n="windows" s={10} c="#222" />
        <Brand>GRAPHISOFT <BrandLight>ID</BrandLight></Brand>
      </Status>
    </Page>
  );
}
